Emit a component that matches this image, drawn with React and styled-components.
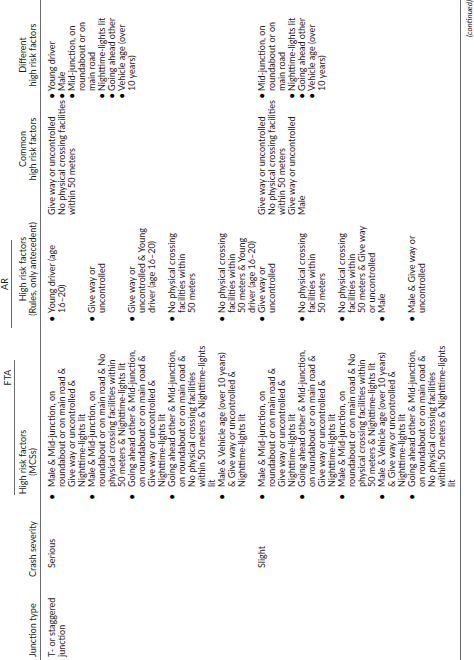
import React from 'react'
import styled, { createGlobalStyle } from 'styled-components'

const GlobalStyle = createGlobalStyle`
    html, body {
        margin: 0;
        padding: 0;
        background: #fff;
    }
`

const Page = styled.div`
    width: 474px;
    height: 660px;
    overflow: hidden;
    background: #fff;
`

// the printed table is turned on its side, so it is laid out 660 wide and then rotated
const Sheet = styled.div`
    width: 660px;
    height: 474px;
    transform-origin: 0 0;
    transform: translateY(660px) rotate(-90deg);
    font-family: Lato, "Open Sans", sans-serif;
    font-size: 9px;
    line-height: 10px;
    color: #1c1c1c;
`

const COLS = '80px 78px 180px 102px 118px 102px'

const GroupHead = styled.div`
    display: grid;
    grid-template-columns: ${COLS};
    height: 15px;
`

const GroupLabel = styled.div`
    grid-column: ${p => p.$col};
    margin: 0 ${p => p.$right}px 0 ${p => p.$left}px;
    padding: 3px 0 0 ${p => p.$shift}px;
    border-bottom: 1px solid #6b6b6b;
    text-align: center;
    height: 11px;
`

const HeadRow = styled.div`
    display: grid;
    grid-template-columns: ${COLS};
    padding-top: 3px;
    border-bottom: 1px solid #6b6b6b;
    height: 22px;
`

const HeadCell = styled.div`
    display: flex;
    flex-direction: column;
    justify-content: flex-end;
    padding: 0 ${p => p.$right || 0}px 2px ${p => p.$left || 0}px;
    text-align: ${p => p.$align || 'left'};
    white-space: nowrap;
`

const Body = styled.div`
    padding-top: 6px;
    border-bottom: 1px solid #6b6b6b;
    height: 413px;
`

const Severity = styled.div`
    display: grid;
    grid-template-columns: ${COLS};
    grid-template-rows: repeat(${p => p.$rows}, auto);
`

const Cell = styled.div`
    grid-column: ${p => p.$col};
    grid-row: ${p => p.$span ? `1 / span ${p.$span}` : 'auto'};
    padding-left: ${p => p.$left || 0}px;
`

const Line = styled.span`
    display: block;
    white-space: nowrap;
`

const Item = styled.div`
    display: flex;
    padding-left: ${p => p.$left}px;
`

const Dot = styled.span`
    flex: none;
    width: ${p => p.$gap}px;
    font-size: 11px;
    color: #000;
`

const Continued = styled.div`
    padding-top: 3px;
    text-align: right;
    font-style: italic;
    font-size: 8px;
`

const Lines = ({ lines }) => lines.map((l, i) => <Line key={i}>{l}</Line>)

const Bullet = ({ lines, left, gap }) => (
    <Item $left={left}>
        <Dot $gap={gap}>•</Dot>
        <div><Lines lines={lines} /></div>
    </Item>
)

const groups = [
    {
        junction: ['T- or staggered', 'junction'],
        severity: 'Serious',
        rows: [
            {
                fta: ['Male & Mid-junction, on', 'roundabout or on main road &', 'Give way or uncontrolled &', 'Nighttime-lights lit'],
                ar: ['Young driver (age', '16–20)'],
            },
            {
                fta: ['Male & Mid-junction, on', 'roundabout or on main road & No', 'physical crossing facilities within', '50 meters & Nighttime-lights lit'],
                ar: ['Give way or', 'uncontrolled'],
            },
            {
                fta: ['Going ahead other & Mid-junction,', 'on roundabout or on main road &', 'Give way or uncontrolled &', 'Nighttime-lights lit'],
                ar: ['Give way or', 'uncontrolled & Young', 'driver (age 16–20)'],
            },
            {
                fta: ['Going ahead other & Mid-junction,', 'on roundabout or on main road &', 'No physical crossing facilities', 'within 50 meters & Nighttime-lights', 'lit'],
                ar: ['No physical crossing', 'facilities within', '50 meters'],
            },
            {
                fta: ['Male & Vehicle age (over 10 years)', '& Give way or uncontrolled &', 'Nighttime-lights lit'],
                ar: ['No physical crossing', 'facilities within', '50 meters & Young', 'driver (age 16–20)'],
            },
        ],
        common: ['Give way or uncontrolled', 'No physical crossing facilities', 'within 50 meters'],
        different: [
            ['Young driver'],
            ['Male'],
            ['Mid-junction, on', 'roundabout or on', 'main road'],
            ['Nighttime-lights lit'],
            ['Going ahead other'],
            ['Vehicle age (over', '10 years)'],
        ],
    },
    {
        junction: [],
        severity: 'Slight',
        rows: [
            {
                fta: ['Male & Mid-junction, on', 'roundabout or on main road &', 'Give way or uncontrolled &', 'Nighttime-lights lit'],
                ar: ['Give way or', 'uncontrolled'],
            },
            {
                fta: ['Going ahead other & Mid-junction,', 'on roundabout or on main road &', 'Give way or uncontrolled &', 'Nighttime-lights lit'],
                ar: ['No physical crossing', 'facilities within', '50 meters'],
            },
            {
                fta: ['Male & Mid-junction, on', 'roundabout or on main road & No', 'physical crossing facilities within', '50 meters & Nighttime-lights lit'],
                ar: ['No physical crossing', 'facilities within', '50 meters & Give way', 'or uncontrolled'],
            },
            {
                fta: ['Male & Vehicle age (over 10 years)', '& Give way or uncontrolled &', 'Nighttime-lights lit'],
                ar: ['Male'],
            },
            {
                fta: ['Going ahead other & Mid-junction,', 'on roundabout or on main road &', 'No physical crossing facilities', 'within 50 meters & Nighttime-lights', 'lit'],
                ar: ['Male & Give way or', 'uncontrolled'],
            },
        ],
        common: ['Give way or uncontrolled', 'No physical crossing facilities', 'within 50 meters', 'Give way or uncontrolled', 'Male'],
        different: [
            ['Mid-junction, on', 'roundabout or on', 'main road'],
            ['Nighttime-lights lit'],
            ['Going ahead other'],
            ['Vehicle age (over', '10 years)'],
        ],
    },
]

const SeverityGroup = ({ group }) => {
    const n = group.rows.length
    return (
        <Severity $rows={n}>
            <Cell $col={1} $span={n} $left={3}><Lines lines={group.junction} /></Cell>
            <Cell $col={2} $span={n} $left={12}>{group.severity}</Cell>
            {group.rows.map((row, i) => (
                <React.Fragment key={i}>
                    <Cell $col={3} style={{ gridRow: i + 1 }}>
                        <Bullet lines={row.fta} left={2} gap={13} />
                    </Cell>
                    <Cell $col={4} style={{ gridRow: i + 1 }}>
                        <Bullet lines={row.ar} left={0} gap={9} />
                    </Cell>
                </React.Fragment>
            ))}
            <Cell $col={5} $span={n} $left={5}><Lines lines={group.common} /></Cell>
            <Cell $col={6} $span={n}>
                {group.different.map((d, i) => (
                    <Bullet key={i} lines={d} left={3} gap={8} />
                ))}
            </Cell>
        </Severity>
    )
}

const App = () => {
    return (
        <Page>
            <GlobalStyle />
            <Sheet>
                <GroupHead>
                    <GroupLabel $col={3} $left={7} $right={38} $shift={100}>FTA</GroupLabel>
                    <GroupLabel $col={4} $left={-6} $right={20} $shift={-20}>AR</GroupLabel>
                </GroupHead>
                <HeadRow>
                    <HeadCell $left={3}>Junction type</HeadCell>
                    <HeadCell $left={3}>Crash severity</HeadCell>
                    <HeadCell $align="center" $right={100}>
                        <Line>High risk factors</Line>
                        <Line>(MCSs)</Line>
                    </HeadCell>
                    <HeadCell $align="center" $left={4}>
                        <Line>High risk factors</Line>
                        <Line>(Rules, only antecedent)</Line>
                    </HeadCell>
                    <HeadCell $align="center" $left={24}>
                        <Line>Common</Line>
                        <Line>high risk factors</Line>
                    </HeadCell>
                    <HeadCell $align="center" $right={8}>
                        <Line>Different</Line>
                        <Line>high risk factors</Line>
                    </HeadCell>
                </HeadRow>
                <Body>
                    {groups.map((g, i) => <SeverityGroup key={i} group={g} />)}
                </Body>
                <Continued>(continued)</Continued>
            </Sheet>
        </Page>
    )
}

export default App
